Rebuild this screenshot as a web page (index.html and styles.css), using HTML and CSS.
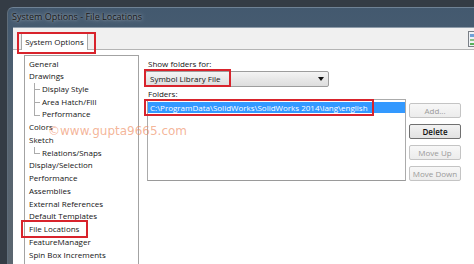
FILE: index.html
```html
<!DOCTYPE html>
<html>
<head>
<meta charset="utf-8">
<link rel="stylesheet" href="styles.css">
</head>
<body>
<div class="screen">
  <div class="window">
    <div class="titlebar">System Options - File Locations</div>
    <div class="client">
      <div class="tabstrip">
        <div class="tab">System Options<span class="mark mark-tab"></span></div>
        <div class="corner-icon">
          <svg width="14" height="16" viewBox="0 0 14 16"><rect x="0.5" y="0.5" width="13" height="15" fill="#eef2f6" stroke="#7a7f86"/><rect x="2" y="3" width="9" height="3" fill="#6fa0d8"/><rect x="2" y="8" width="9" height="2" fill="#8cc08a"/><rect x="2" y="12" width="9" height="2" fill="#58b058"/></svg>
        </div>
      </div>
      <div class="panel">
        <ul class="tree">
          <li>General</li>
          <li>Drawings</li>
          <li class="child">Display Style</li>
          <li class="child">Area Hatch/Fill</li>
          <li class="child last">Performance</li>
          <li>Colors</li>
          <li>Sketch</li>
          <li class="child last">Relations/Snaps</li>
          <li>Display/Selection</li>
          <li>Performance</li>
          <li>Assemblies</li>
          <li>External References</li>
          <li>Default Templates</li>
          <li class="marked">File Locations<span class="mark mark-item"></span></li>
          <li>FeatureManager</li>
          <li>Spin Box Increments</li>
        </ul>
        <div class="right">
          <div class="label first">Show folders for:</div>
          <div class="select">
            <span class="select-text">Symbol Library File</span>
            <span class="arrow"></span>
            <span class="mark mark-select"></span>
          </div>
          <div class="label second">Folders:</div>
          <div class="folders">
            <div class="list">
              <div class="row selected">C:\ProgramData\SolidWorks\SolidWorks 2014\lang\english</div>
              <span class="mark mark-row"></span>
            </div>
            <div class="buttons">
              <div class="btn disabled">Add...</div>
              <div class="btn active">Delete</div>
              <div class="btn disabled">Move Up</div>
              <div class="btn disabled">Move Down</div>
            </div>
          </div>
        </div>
      </div>
    </div>
  </div>
  <div class="watermark">©www.gupta9665.com</div>
</div>
</body>
</html>
```
FILE: styles.css
```css
* { box-sizing: border-box; }
html, body { margin: 0; padding: 0; }
body {
  width: 474px;
  height: 264px;
  overflow: hidden;
  background: #343c45;
  font-family: "Open Sans", "Noto Sans", sans-serif;
  color: #141414;
}
.screen {
  position: relative;
  height: 264px;
  padding: 7px 0 0 7px;
}
.window {
  height: 100%;
  display: flex;
  flex-direction: column;
  background: linear-gradient(#43596f, #465b70 22px, #56636f 120px, #5b6670);
  border-top: 1px solid #6f8295;
  border-left: 1px solid #5f6d7a;
  border-radius: 6px 0 0 0;
}
.titlebar {
  height: 19px;
  padding-left: 4px;
  font-size: 9px;
  line-height: 18px;
  color: #161616;
  text-shadow: 0 0 5px rgba(255,255,255,0.55), 0 0 2px rgba(255,255,255,0.35);
}
.client {
  flex: 1;
  margin-left: 5px;
  display: flex;
  flex-direction: column;
  background: #f0f0f0;
  border-top: 1px solid #8e9caa;
  overflow: hidden;
}
.tabstrip {
  height: 22px;
  display: flex;
  align-items: flex-end;
  border-bottom: 1px solid #b4b4b4;
}
.tab {
  position: relative;
  margin-left: 8px;
  margin-bottom: -1px;
  width: 67px;
  height: 17px;
  background: #ffffff;
  border: 1px solid #a8a8a8;
  border-bottom: none;
  font-size: 8px;
  line-height: 15px;
  text-align: center;
}
.corner-icon {
  margin-left: auto;
  margin-right: -8px;
  align-self: flex-start;
  margin-top: 3px;
  height: 16px;
}
.corner-icon svg { display: block; }
.panel {
  flex: 1;
  display: flex;
  align-items: flex-start;
  background: #ffffff;
  padding: 5px 0 0 11px;
  overflow: hidden;
}
.tree {
  list-style: none;
  margin: 0;
  padding: 1.5px 0 0 4px;
  width: 115px;
  height: 220px;
  flex: none;
  border: 1px solid #a3a3a3;
  font-size: 8px;
  line-height: 12.73px;
  white-space: nowrap;
}
.tree li { position: relative; }
.tree li.child { padding-left: 13px; }
.tree li.child::before {
  content: "";
  position: absolute;
  left: 5px;
  top: 0;
  height: 100%;
  border-left: 1px solid #ababab;
}
.tree li.child.last::before { height: 50%; }
.tree li.child::after {
  content: "";
  position: absolute;
  left: 5px;
  top: 50%;
  width: 6px;
  border-top: 1px solid #ababab;
}
.mark {
  position: absolute;
  border: 2px solid #d8232c;
  pointer-events: none;
}
.mark-tab { left: -5px; top: -2px; width: 79px; height: 22px; }
.mark-item { left: -8px; top: -3.5px; width: 67px; height: 18px; }
.mark-select { left: -2px; top: -3px; width: 87px; height: 18px; }
.mark-row { left: -4px; top: -1px; width: 230px; height: 17px; }
.right {
  margin-left: 6px;
  padding-top: 3px;
  flex: none;
}
.label {
  font-size: 8px;
  padding-left: 3px;
}
.label.first { line-height: 12px; margin-bottom: 1px; }
.label.second { line-height: 10px; margin-top: 2px; }
.select {
  position: relative;
  width: 184px;
  height: 16px;
  border: 1px solid #9d9d9d;
  border-radius: 2px;
  background: linear-gradient(#f4f4f4, #e8e8e8 50%, #dddddd);
  font-size: 8px;
  line-height: 14px;
  padding-left: 4px;
}
.arrow {
  position: absolute;
  right: 4px;
  top: 5px;
  width: 0;
  height: 0;
  border-left: 3px solid transparent;
  border-right: 3px solid transparent;
  border-top: 4px solid #111;
}
.folders {
  display: flex;
  align-items: flex-start;
}
.list {
  position: relative;
  margin-left: 2px;
  width: 259px;
  height: 82px;
  border: 1px solid #ababab;
  border-bottom-color: #9a9a9a;
  background: #fff;
}
.row {
  margin-top: 2px;
  height: 11px;
  padding-left: 2px;
  font-size: 8px;
  line-height: 11px;
  white-space: nowrap;
}
.row.selected { background: #3399ff; color: #fff; }
.buttons {
  margin-left: 3px;
  margin-top: 4px;
  width: 52px;
  display: flex;
  flex-direction: column;
  gap: 6px;
}
.btn {
  height: 15px;
  border: 1px solid #c4c4c4;
  border-radius: 2px;
  background: linear-gradient(#f7f7f7, #ececec);
  font-size: 8px;
  line-height: 13px;
  text-align: center;
  white-space: nowrap;
}
.btn.disabled { color: #9a9a9a; }
.btn.active {
  border-color: #707070;
  background: linear-gradient(#f2f2f2, #e2e2e2);
  color: #111;
  font-weight: 600;
}
.watermark {
  position: absolute;
  left: 48px;
  top: 123px;
  font-family: "DejaVu Sans", sans-serif;
  font-size: 12px;
  line-height: 16px;
  color: rgba(238, 140, 95, 0.65);
  white-space: nowrap;
}
```
